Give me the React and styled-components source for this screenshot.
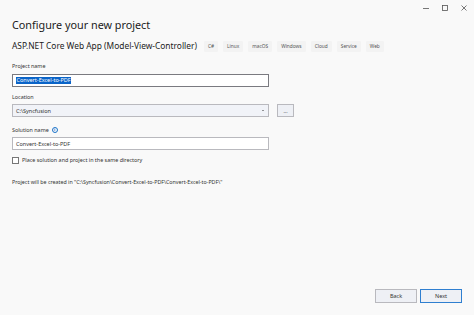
import React from "react";
import styled, { createGlobalStyle } from "styled-components";

const Global = createGlobalStyle`
  html, body { margin: 0; padding: 0; background: #f9f9f9; }
  body { font-family: "Segoe UI", "Noto Sans", "Open Sans", sans-serif; color: #1b1b1b; }
  * { box-sizing: border-box; }
`;

const Window = styled.div`
  position: relative;
  width: 474px;
  height: 315px;
  background: #f9f9f9;
  display: flex;
  flex-direction: column;
  padding: 0 12px;
  overflow: hidden;
`;

const Controls = styled.div`
  position: absolute;
  top: 3px;
  right: 4px;
  display: flex;
  gap: 7px;
  align-items: center;
`;

const CtrlBtn = styled.div`
  width: 12px;
  height: 10px;
  display: flex;
  align-items: center;
  justify-content: center;
`;

const Title = styled.h1`
  margin: 17px 0 0;
  font-size: 10.8px;
  font-weight: 400;
  line-height: 15px;
  color: #1b1b1b;
`;

const SubRow = styled.div`
  display: flex;
  align-items: center;
  margin-top: 8px;
  height: 12px;
`;

const Subtitle = styled.div`
  font-size: 8.4px;
  line-height: 12px;
  color: #1b1b1b;
  margin-right: 7px;
`;

const Tag = styled.span`
  background: #f3f3f3;
  color: #555;
  font-size: 4.8px;
  line-height: 11px;
  padding: 0 4px;
  margin-right: 5px;
  border-radius: 1px;
`;

const Label = styled.div`
  font-size: 5.4px;
  line-height: 8px;
  color: #333;
  margin-top: ${(p) => p.$mt}px;
  display: flex;
  align-items: center;
  gap: 3px;
`;

const Row = styled.div`
  display: flex;
  align-items: center;
  gap: 8px;
  margin-top: ${(p) => p.$mt}px;
`;

const Input = styled.div`
  width: 257px;
  height: 13px;
  background: ${(p) => (p.$select ? "#f1f3f8" : "#ffffff")};
  border: 1px solid ${(p) => (p.$focus ? "#7a7a80" : "#b9b9be")};
  display: flex;
  align-items: center;
  padding: 0 3px;
  font-size: 5.5px;
  color: #333;
`;

const Selected = styled.span`
  background: #0a64c8;
  color: #fff;
  line-height: 7px;
  padding: 0 0.5px;
`;

const Arrow = styled.span`
  margin-left: auto;
  width: 0;
  height: 0;
  border-left: 1.3px solid transparent;
  border-right: 1.3px solid transparent;
  border-top: 1.6px solid #333;
  margin-right: 1px;
`;

const DotsBtn = styled.div`
  width: 17px;
  height: 13px;
  background: #eef0f5;
  border: 1px solid #b9b9be;
  font-size: 5px;
  color: #444;
  display: flex;
  align-items: center;
  justify-content: center;
`;

const Checkbox = styled.div`
  width: 7px;
  height: 7px;
  border: 1px solid #777;
  background: #fff;
`;

const CheckLabel = styled.span`
  font-size: 5.4px;
  color: #333;
  margin-left: -5px;
`;

const Info = styled.span`
  width: 6px;
  height: 6px;
  border-radius: 50%;
  border: 0.8px solid #1a73c9;
  color: #1a73c9;
  font-size: 4px;
  font-weight: 700;
  display: inline-flex;
  align-items: center;
  justify-content: center;
  line-height: 1;
`;

const PathText = styled.div`
  margin-top: 14px;
  font-size: 5.3px;
  color: #333;
`;

const Footer = styled.div`
  margin-top: auto;
  margin-bottom: 12px;
  display: flex;
  justify-content: flex-end;
  gap: 3px;
`;

const Button = styled.div`
  width: 42px;
  height: 14px;
  background: #eef0f5;
  border: 1px solid ${(p) => (p.$primary ? "#2f7fd0" : "#b9b9be")};
  font-size: 5.5px;
  color: #333;
  display: flex;
  align-items: center;
  justify-content: center;
`;

export default function App() {
  const tags = ["C#", "Linux", "macOS", "Windows", "Cloud", "Service", "Web"];
  return (
    <>
      <Global />
      <Window>
        <Controls>
          <CtrlBtn>
            <svg width="8" height="8" viewBox="0 0 8 8">
              <line x1="1" y1="4.5" x2="7" y2="4.5" stroke="#555" strokeWidth="0.8" />
            </svg>
          </CtrlBtn>
          <CtrlBtn>
            <svg width="8" height="8" viewBox="0 0 8 8">
              <rect x="1.5" y="1.5" width="5" height="5" fill="none" stroke="#555" strokeWidth="0.8" />
            </svg>
          </CtrlBtn>
          <CtrlBtn>
            <svg width="8" height="8" viewBox="0 0 8 8">
              <path d="M1.5 1.5 L6.5 6.5 M6.5 1.5 L1.5 6.5" stroke="#555" strokeWidth="0.8" />
            </svg>
          </CtrlBtn>
        </Controls>
        <Title>Configure your new project</Title>
        <SubRow>
          <Subtitle>ASP.NET Core Web App (Model-View-Controller)</Subtitle>
          {tags.map((t) => (
            <Tag key={t}>{t}</Tag>
          ))}
        </SubRow>
        <Label $mt={10}>Project name</Label>
        <Row $mt={4}>
          <Input $focus>
            <Selected>Convert-Excel-to-PDF</Selected>
          </Input>
        </Row>
        <Label $mt={6}>Location</Label>
        <Row $mt={3}>
          <Input $select>
            C:\Syncfusion
            <Arrow />
          </Input>
          <DotsBtn>...</DotsBtn>
        </Row>
        <Label $mt={9}>
          Solution name
          <Info>i</Info>
        </Label>
        <Row $mt={3}>
          <Input>Convert-Excel-to-PDF</Input>
        </Row>
        <Row $mt={6}>
          <Checkbox />
          <CheckLabel>Place solution and project in the same directory</CheckLabel>
        </Row>
        <PathText>
          Project will be created in "C:\Syncfusion\Convert-Excel-to-PDF\Convert-Excel-to-PDF\"
        </PathText>
        <Footer>
          <Button>Back</Button>
          <Button $primary>Next</Button>
        </Footer>
      </Window>
    </>
  );
}
